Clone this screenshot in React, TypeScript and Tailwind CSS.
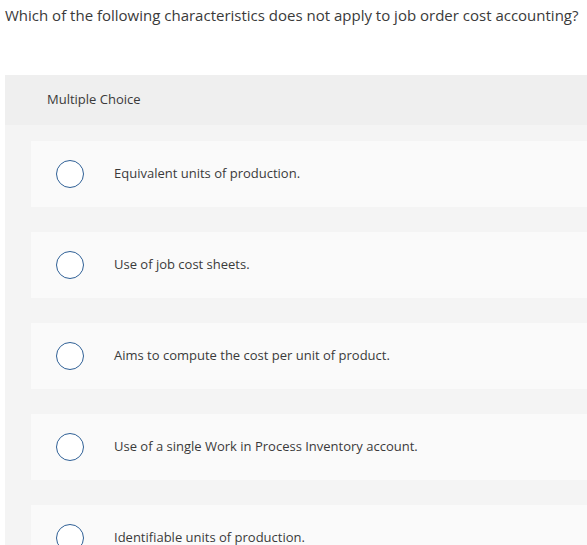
import React from "react";

const options = [
  "Equivalent units of production.",
  "Use of job cost sheets.",
  "Aims to compute the cost per unit of product.",
  "Use of a single Work in Process Inventory account.",
  "Identifiable units of production.",
];

export default function App() {
  return (
    <div className="w-[587px] h-[545px] overflow-hidden bg-white text-[#3a3a3a]" style={{ fontFamily: '"Open Sans", Arial, sans-serif' }}>
      <div className="pl-[5px] pt-[4px] text-[15px] leading-[22px] whitespace-nowrap">
        Which of the following characteristics does not apply to job order cost accounting?
      </div>
      <div className="mt-[49px] ml-[5px] bg-[#f4f4f4]">
        <div className="h-[50px] bg-[#efefef] flex items-center pl-[42px] text-[13px]">
          Multiple Choice
        </div>
        <div className="pt-[16px] pl-[26px] flex flex-col gap-[25px]">
          {options.map((o) => (
            <div key={o} className="h-[66px] bg-[#fafafa] flex items-center">
              <div className="ml-[25px] w-[28px] h-[28px] rounded-full border-[1.5px] border-[#2f6096] bg-white shrink-0" />
              <div className="ml-[30px] text-[13px]">{o}</div>
            </div>
          ))}
        </div>
      </div>
    </div>
  );
}
